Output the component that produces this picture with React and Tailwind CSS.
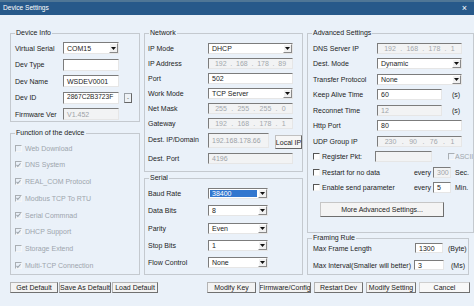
import React from "react";

const sunken =
  "border border-t-[#7c7c7c] border-l-[#7c7c7c] border-b-[#e6e6e6] border-r-[#e6e6e6]";

function Check({ checked, disabled }) {
  return (
    <span
      className={`flex items-center justify-center w-[7px] h-[7px] shrink-0 border border-b-[#f6f6f6] border-r-[#f6f6f6] ${
        disabled
          ? "border-t-[#a9aeb3] border-l-[#a9aeb3] bg-transparent"
          : "border-t-[#555] border-l-[#555] bg-white"
      }`}
    >
      {checked && (
        <svg width="6" height="6" viewBox="0 0 6 6" className="block">
          <path
            d="M0.6 2.8 L2.2 4.6 L5.4 0.9"
            fill="none"
            stroke={disabled ? "#9ea5ac" : "#333"}
            strokeWidth="1.3"
          />
        </svg>
      )}
    </span>
  );
}

function Field({ value, disabled, className }) {
  return (
    <div
      className={`h-full flex items-center px-[3px] whitespace-nowrap overflow-hidden ${sunken} ${
        disabled ? "bg-[#f2f3f4] text-[#9da2a7]" : "bg-white text-[#1d1d1d]"
      } ${className}`}
    >
      {value}
    </div>
  );
}

function IpField({ parts, className }) {
  return (
    <div
      className={`h-full flex items-center justify-around px-[4px] bg-[#f2f3f4] text-[#a3a8ad] ${sunken} ${className}`}
    >
      <span>{parts[0]}</span>
      <span>.</span>
      <span>{parts[1]}</span>
      <span>.</span>
      <span>{parts[2]}</span>
      <span>.</span>
      <span>{parts[3]}</span>
    </div>
  );
}

function Combo({ value, selected, className }) {
  return (
    <div className={`h-full flex items-stretch bg-white ${sunken} ${className}`}>
      <div className="flex-1 flex items-center overflow-hidden whitespace-nowrap p-[1px]">
        <span
          className={`h-full flex items-center px-[2px] ${
            selected ? "flex-1 bg-[#3277cf] text-white" : "text-[#1d1d1d]"
          }`}
        >
          {value}
        </span>
      </div>
      <div className="w-[9px] flex items-center justify-center bg-[#f1f1f1] border-r border-b border-[#8a8a8a] border-t border-l border-t-white border-l-white">
        <svg width="5" height="3" viewBox="0 0 5 3" className="block">
          <path d="M0 0 H5 L2.5 3 Z" fill="#111" />
        </svg>
      </div>
    </div>
  );
}

function Group({ title, className, children }) {
  return (
    <fieldset className={`border border-[#c4c9cf] w-full ${className}`}>
      <legend className="ml-[4px] px-[1px] leading-[8px] text-[#222]">{title}</legend>
      {children}
    </fieldset>
  );
}

function Btn({ children, className }) {
  return (
    <div
      className={`h-[11px] flex items-center justify-center overflow-hidden whitespace-nowrap bg-[#f3f3f3] border border-[#b4b4b4] border-b-[#707070] border-r-[#707070] text-[#222] ${className}`}
    >
      {children}
    </div>
  );
}

export default function App() {
  const functions = [
    ["Web Download", false],
    ["DNS System", true],
    ["REAL_COM Protocol", true],
    ["Modbus TCP To RTU", true],
    ["Serial Commnad", true],
    ["DHCP Support", true],
    ["Storage Extend", false],
    ["Multi-TCP Connection", true],
  ];

  return (
    <div className="w-[474px] h-[306px] overflow-hidden bg-[#eaf1f9] font-['Liberation_Sans',Arial,sans-serif] text-[7px] leading-none text-[#1d1d1d]">
      {/* title bar */}
      <div className="h-[15px] flex items-center justify-between bg-[#27598a] border-t-2 border-[#4f7696] pl-[3px] pr-[7px] text-white">
        <span className="text-[6.6px]">Device Settings</span>
        <span className="text-[9px]">×</span>
      </div>

      <div className="flex gap-[4px] pl-[10px] pt-[14px]">
        {/* column 1 */}
        <div className="w-[130px] flex flex-col gap-[7px]">
          <Group title="Device Info" className="h-[93px]">
            <div className="flex flex-col gap-[4.5px] pl-[4px] pt-[5px]">
              <div className="flex items-center h-[12px]">
                <span className="w-[48px]">Virtual Serial</span>
                <Combo value="COM15" className="w-[56px]" />
              </div>
              <div className="flex items-center h-[12px]">
                <span className="w-[48px]">Dev Type</span>
                <Field value="" className="w-[56px]" />
              </div>
              <div className="flex items-center h-[12px]">
                <span className="w-[48px]">Dev Name</span>
                <Field value="WSDEV0001" className="w-[56px]" />
              </div>
              <div className="flex items-center h-[12px]">
                <span className="w-[48px]">Dev ID</span>
                <Field value="2867C2B3723F" className="w-[56px] text-[6.6px]" />
                <div className="ml-[5px] w-[8px] h-[10px] flex items-center justify-center border border-[#9aa0a6] border-b-[#666] border-r-[#666] bg-[#eef2f6] text-[6px] text-[#333]">
                  -
                </div>
              </div>
              <div className="flex items-center h-[12px]">
                <span className="w-[48px]">Firmware Ver</span>
                <Field value="V1.452" disabled className="w-[56px]" />
              </div>
            </div>
          </Group>

          <Group title="Function of the device" className="h-[146px]">
            <div className="flex flex-col gap-[6.8px] pl-[4px] pt-[6px]">
              {functions.map(([name, on]) => (
                <div key={name} className="flex items-center h-[10px] text-[#9da5ad]">
                  <Check checked={on} disabled />
                  <span className="ml-[3px]">{name}</span>
                </div>
              ))}
            </div>
          </Group>
        </div>

        {/* column 2 */}
        <div className="w-[159px] flex flex-col gap-[2px]">
          <Group title="Network" className="h-[143px]">
            <div className="flex flex-col pl-[3px] pt-[6px]">
              <div className="flex items-center h-[11px]">
                <span className="w-[60px]">IP Mode</span>
                <Combo value="DHCP" className="w-[85px]" />
              </div>
              <div className="flex items-center h-[11px] mt-[4px]">
                <span className="w-[60px]">IP Address</span>
                <IpField parts={["192", "168", "178", "89"]} className="w-[85px]" />
              </div>
              <div className="flex items-center h-[11px] mt-[4px]">
                <span className="w-[60px]">Port</span>
                <Field value="502" className="w-[85px]" />
              </div>
              <div className="flex items-center h-[11px] mt-[4px]">
                <span className="w-[60px]">Work Mode</span>
                <Combo value="TCP Server" className="w-[85px]" />
              </div>
              <div className="flex items-center h-[11px] mt-[4px]">
                <span className="w-[60px]">Net Mask</span>
                <IpField parts={["255", "255", "255", "0"]} className="w-[85px]" />
              </div>
              <div className="flex items-center h-[11px] mt-[4px]">
                <span className="w-[60px]">Gateway</span>
                <IpField parts={["192", "168", "178", "1"]} className="w-[85px]" />
              </div>
              <div className="flex items-start h-[15px] mt-[4px]">
                <span className="w-[60px] h-[12px] flex items-center">Dest. IP/Domain</span>
                <Field value="192.168.178.66" disabled className="w-[61px] h-[12px]" />
                <div className="ml-[6px] mt-[2px] w-[27px] h-[14px] flex items-center justify-center bg-[#f6f6f6] border border-[#c0c0c0] border-b-[#666] border-r-[#666] whitespace-nowrap">
                  Local IP
                </div>
              </div>
              <div className="flex items-center h-[11px] mt-[5px]">
                <span className="w-[60px]">Dest. Port</span>
                <Field value="4196" disabled className="w-[85px]" />
              </div>
            </div>
          </Group>

          <Group title="Serial" className="h-[101px]">
            <div className="flex flex-col gap-[6.3px] pl-[3px] pt-[6px]">
              <div className="flex items-center h-[11px]">
                <span className="w-[60px]">Baud Rate</span>
                <Combo value="38400" selected className="w-[60px]" />
              </div>
              <div className="flex items-center h-[11px]">
                <span className="w-[60px]">Data Bits</span>
                <Combo value="8" className="w-[60px]" />
              </div>
              <div className="flex items-center h-[11px]">
                <span className="w-[60px]">Parity</span>
                <Combo value="Even" className="w-[60px]" />
              </div>
              <div className="flex items-center h-[11px]">
                <span className="w-[60px]">Stop Bits</span>
                <Combo value="1" className="w-[60px]" />
              </div>
              <div className="flex items-center h-[11px]">
                <span className="w-[60px]">Flow Control</span>
                <Combo value="None" className="w-[60px]" />
              </div>
            </div>
          </Group>
        </div>

        {/* column 3 */}
        <div className="w-[162px] flex flex-col gap-[1px]">
          <Group title="Advanced Settings" className="h-[204px]">
            <div className="flex flex-col gap-[4.5px] pl-[5px] pt-[5.5px]">
              <div className="flex items-center h-[11px]">
                <span className="w-[64px]">DNS Server IP</span>
                <IpField parts={["192", "168", "178", "1"]} className="w-[85px]" />
              </div>
              <div className="flex items-center h-[11px]">
                <span className="w-[64px]">Dest. Mode</span>
                <Combo value="Dynamic" className="w-[85px]" />
              </div>
              <div className="flex items-center h-[11px]">
                <span className="w-[64px] whitespace-nowrap">Transfer Protocol</span>
                <Combo value="None" className="w-[85px]" />
              </div>
              <div className="flex items-center h-[11px]">
                <span className="w-[64px]">Keep Alive Time</span>
                <Field value="60" className="w-[65px]" />
                <span className="ml-[10px]">(s)</span>
              </div>
              <div className="flex items-center h-[11px]">
                <span className="w-[64px]">Reconnet Time</span>
                <Field value="12" disabled className="w-[65px]" />
                <span className="ml-[10px]">(s)</span>
              </div>
              <div className="flex items-center h-[11px]">
                <span className="w-[64px]">Http Port</span>
                <Field value="80" className="w-[85px]" />
              </div>
              <div className="flex items-center h-[11px]">
                <span className="w-[64px]">UDP Group IP</span>
                <IpField parts={["230", "90", "76", "1"]} className="w-[85px]" />
              </div>
              <div className="flex items-center h-[11px]">
                <span className="w-[62px] flex items-center">
                  <Check />
                  <span className="ml-[2px]">Register Pkt:</span>
                </span>
                <Field value="" disabled className="w-[57px]" />
                <span className="ml-[16px] flex items-center text-[#a0a6ac] whitespace-nowrap">
                  <Check disabled />
                  <span>ASCII</span>
                </span>
              </div>
              <div className="flex items-center h-[11px]">
                <span className="w-[100px] flex items-center">
                  <Check />
                  <span className="ml-[2px]">Restart for no data</span>
                </span>
                <span className="w-[18px] text-right">every</span>
                <Field value="300" disabled className="ml-[2px] w-[18px]" />
                <span className="ml-[4px]">Sec.</span>
              </div>
              <div className="flex items-center h-[11px]">
                <span className="w-[100px] flex items-center whitespace-nowrap">
                  <Check />
                  <span className="ml-[2px]">Enable send parameter</span>
                </span>
                <span className="w-[18px] text-right">every</span>
                <Field value="5" className="ml-[2px] w-[18px]" />
                <span className="ml-[4px]">Min.</span>
              </div>
              <div className="mt-[4.5px] ml-[7px] w-[124px] h-[15px] flex items-center justify-center bg-[#f4f4f4] border border-[#c6c6c6] border-b-[#6e6e6e] border-r-[#6e6e6e]">
                More Advanced Settings...
              </div>
            </div>
          </Group>

          <Group title="Framing Rule" className="h-[41px]">
            <div className="flex flex-col gap-[7px] pl-[5px] pt-[1px]">
              <div className="flex items-center h-[10px]">
                <span className="w-[102px]">Max Frame Length</span>
                <Field value="1300" className="w-[28px]" />
                <span className="ml-[5px]">(Byte)</span>
              </div>
              <div className="flex items-center h-[10px]">
                <span className="w-[101px] whitespace-nowrap">Max Interval(Smaller will better)</span>
                <Field value="3" className="w-[30px]" />
                <span className="ml-[7px]">(Ms)</span>
              </div>
            </div>
          </Group>
        </div>
      </div>

      {/* bottom buttons */}
      <div className="flex items-center pl-[10px] mt-[7px]">
        <Btn className="w-[48px]">Get Default</Btn>
        <Btn className="w-[52px] ml-[1px]">Save As Default</Btn>
        <Btn className="w-[46px] ml-[1px]">Load Default</Btn>
        <Btn className="w-[49px] ml-[49px]">Modify Key</Btn>
        <Btn className="w-[52px] ml-[3px]">Firmware/Config</Btn>
        <Btn className="w-[49px] ml-[3px]">Restart Dev</Btn>
        <Btn className="w-[50px] ml-[3px]">Modify Setting</Btn>
        <Btn className="w-[51px] ml-[3px] bg-[#f8f8f8] border-[#cfcfcf]">Cancel</Btn>
      </div>
    </div>
  );
}
